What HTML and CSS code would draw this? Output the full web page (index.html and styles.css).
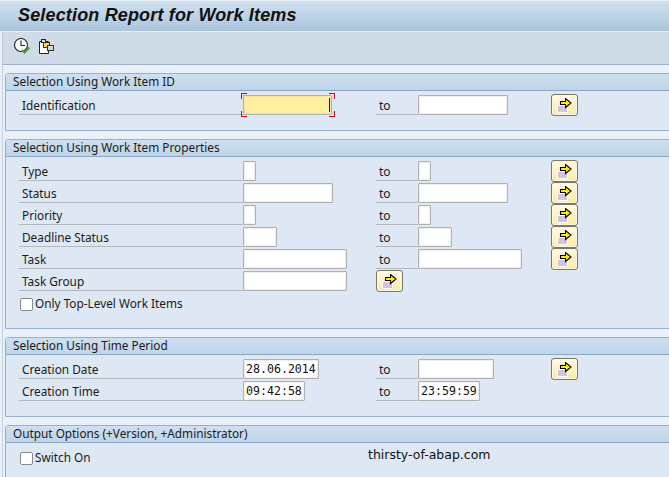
FILE: index.html
```html
<!DOCTYPE html>
<html lang="en">
<head>
<meta charset="utf-8">
<title>Selection Report for Work Items</title>
<link rel="stylesheet" href="styles.css">
</head>
<body>
<svg class="defs" width="0" height="0" aria-hidden="true">
  <symbol id="multi" viewBox="0 0 16 15">
    <rect x="0.500" y="7.500" width="10" height="7" fill="#d3c3e0" stroke="#fff"/>
    <path d="M3.500 3.500h5V.5l5.500 4.500-5.500 4.500v-3h-5z" fill="#ffee00" stroke="#000" stroke-width="1.100"/>
  </symbol>
</svg>
<div class="screen">
  <header class="titlebar"><h1 class="title">Selection Report for Work Items</h1></header>
  <nav class="toolbar">
    <svg class="tool" width="17" height="17" viewBox="0 0 17 17">
      <circle cx="7" cy="7" r="6.500" fill="#fff" stroke="#222" stroke-width="1.100"/>
      <path d="M7 2.500V7.500h4" fill="none" stroke="#222" stroke-width="1.100"/>
      <path d="M8 12l2.500 2.500 5-5" fill="none" stroke="#4fa52e" stroke-width="2"/>
    </svg>
    <svg class="tool" width="16" height="17" viewBox="0 0 16 17">
      <path d="M1.500 3.500h9v12h-9z" fill="#fff" stroke="#222"/>
      <rect x="3.500" y="1.500" width="4" height="3" fill="#ddd" stroke="#222"/>
      <rect x="5.500" y="4.500" width="6" height="5" fill="#f5d94a" stroke="#333"/>
      <rect x="9.500" y="7.500" width="6" height="5" fill="#d8d8d8" stroke="#333"/>
    </svg>
  </nav>
  <main class="content">
    <section class="group">
      <h2 class="group-title">Selection Using Work Item ID</h2>
      <div class="rows">
        <div class="row">
          <span class="label">Identification</span>
          <span class="cell"><span class="field w88 focused"><i class="corners"></i><i class="caret"></i></span></span>
          <span class="to">to</span>
          <span class="cell"><span class="field w90"></span></span>
          <button class="more" type="button" aria-label="Multiple selection"><svg width="16" height="15"><use href="#multi"/></svg></button>
        </div>
      </div>
    </section>
    <section class="group">
      <h2 class="group-title">Selection Using Work Item Properties</h2>
      <div class="rows">
        <div class="row">
          <span class="label">Type</span>
          <span class="cell"><span class="field w13"></span></span>
          <span class="to">to</span>
          <span class="cell"><span class="field w13"></span></span>
          <button class="more" type="button" aria-label="Multiple selection"><svg width="16" height="15"><use href="#multi"/></svg></button>
        </div>
        <div class="row">
          <span class="label">Status</span>
          <span class="cell"><span class="field w90"></span></span>
          <span class="to">to</span>
          <span class="cell"><span class="field w90"></span></span>
          <button class="more" type="button" aria-label="Multiple selection"><svg width="16" height="15"><use href="#multi"/></svg></button>
        </div>
        <div class="row">
          <span class="label">Priority</span>
          <span class="cell"><span class="field w13"></span></span>
          <span class="to">to</span>
          <span class="cell"><span class="field w13"></span></span>
          <button class="more" type="button" aria-label="Multiple selection"><svg width="16" height="15"><use href="#multi"/></svg></button>
        </div>
        <div class="row">
          <span class="label">Deadline Status</span>
          <span class="cell"><span class="field w34"></span></span>
          <span class="to">to</span>
          <span class="cell"><span class="field w34"></span></span>
          <button class="more" type="button" aria-label="Multiple selection"><svg width="16" height="15"><use href="#multi"/></svg></button>
        </div>
        <div class="row">
          <span class="label">Task</span>
          <span class="cell"><span class="field w104"></span></span>
          <span class="to">to</span>
          <span class="cell"><span class="field w104"></span></span>
          <button class="more" type="button" aria-label="Multiple selection"><svg width="16" height="15"><use href="#multi"/></svg></button>
        </div>
        <div class="row">
          <span class="label">Task Group</span>
          <span class="cell"><span class="field w104"></span></span>
          <button class="more" type="button" aria-label="Multiple selection"><svg width="16" height="15"><use href="#multi"/></svg></button>
        </div>
        <label class="check-row"><span class="box"></span><span class="check-text">Only Top-Level Work Items</span></label>
      </div>
    </section>
    <section class="group">
      <h2 class="group-title">Selection Using Time Period</h2>
      <div class="rows">
        <div class="row">
          <span class="label">Creation Date</span>
          <span class="cell"><span class="field w76 mono">28.06.2014</span></span>
          <span class="to">to</span>
          <span class="cell"><span class="field w76"></span></span>
          <button class="more" type="button" aria-label="Multiple selection"><svg width="16" height="15"><use href="#multi"/></svg></button>
        </div>
        <div class="row">
          <span class="label">Creation Time</span>
          <span class="cell"><span class="field w62 mono">09:42:58</span></span>
          <span class="to">to</span>
          <span class="cell"><span class="field w62 mono">23:59:59</span></span>
        </div>
      </div>
    </section>
    <section class="group last">
      <h2 class="group-title">Output Options (+Version, +Administrator)</h2>
      <div class="rows">
        <label class="check-row"><span class="box"></span><span class="check-text">Switch On</span></label>
      </div>
    </section>
  </main>
  <div class="watermark">thirsty-of-abap.com</div>
</div>
</body>
</html>
```
FILE: styles.css
```css
* { box-sizing: border-box; }
html, body { margin: 0; padding: 0; }
body {
  width: 669px;
  height: 477px;
  overflow: hidden;
  font-family: "Noto Sans", sans-serif;
  font-size: 11.8px;
  color: #1a1a1a;
  background: #e9f0f7;
}
.defs { position: absolute; }
.screen { position: relative; height: 477px; overflow: hidden; }
.titlebar {
  height: 32px;
  padding: 0 0 2px 18px;
  display: flex;
  align-items: center;
  border-top: 1px solid #e8f0f6;
  border-bottom: 1px solid #e6eef5;
  background: linear-gradient(#d0e1ef, #abc4dc);
}
.title {
  margin: 0;
  font: italic bold 18px "Liberation Sans", sans-serif;
  letter-spacing: 0.16px;
  color: #111;
}
.toolbar {
  height: 33px;
  display: flex;
  align-items: flex-start;
  gap: 7px;
  padding: 6px 0 0 11px;
  margin-left: 2px;
  background: #cfdce7;
  border-bottom: 1px solid #9db1c8;
  border-left: 1px solid #b6c6d6;
}
.tool { display: block; }
.content {
  margin-left: 2px;
  padding: 8px 0 0 2px;
  border-left: 1px solid #c4d2e0;
}
.group {
  margin: 0 -4px 8px 0;
  border: 1px solid #94b1d0;
  border-radius: 3px 0 0 0;
  background: #dde8f4;
}
.group-title {
  margin: 0;
  height: 17px;
  padding: 0 0 0 7px;
  font-size: 11.8px;
  font-weight: normal;
  line-height: 14px;
  background: linear-gradient(#cfe0f0, #bed4e8);
  border-bottom: 1px solid #8ba6c6;
}
.rows { padding: 4px 0 13px 13px; }
.row { display: flex; height: 22px; align-items: flex-start; }
.label {
  width: 224px;
  height: 20px;
  padding-left: 3px;
  line-height: 20px;
  border-bottom: 1px solid #b4b8bd;
}
.cell { width: 133px; }
.to {
  width: 42px;
  height: 20px;
  padding-left: 3px;
  line-height: 21px;
  font-size: 12px;
  border-bottom: 1px solid #b4b8bd;
}
.field {
  position: relative;
  display: block;
  height: 20px;
  background: #fff;
  border: 1px solid #b0b0b0;
  border-radius: 1px;
  box-shadow: inset 0 0 0 1px #f0f0f0;
}
.w13 { width: 13px; }
.w34 { width: 34px; }
.w62 { width: 62px; }
.w76 { width: 76px; }
.w88 { width: 89px; }
.w90 { width: 90px; }
.w104 { width: 104px; }
.mono {
  font-family: "DejaVu Sans Mono", monospace;
  font-size: 11.6px;
  line-height: 19px;
  padding-left: 2px;
  color: #111;
}
.focused { background: #ffef9f; box-shadow: inset 0 0 0 1px #f3e6a5; }
.caret {
  position: absolute;
  right: 1px;
  top: 2px;
  bottom: 2px;
  width: 1px;
  background: #15203f;
}
.corners {
  position: absolute;
  left: -3px;
  top: -3px;
  right: -4px;
  bottom: -3px;
  background:
    linear-gradient(#e8000f, #e8000f) left top / 6px 1px no-repeat,
    linear-gradient(#e8000f, #e8000f) left top / 1px 6px no-repeat,
    linear-gradient(#e8000f, #e8000f) right top / 6px 1px no-repeat,
    linear-gradient(#e8000f, #e8000f) right top / 1px 6px no-repeat,
    linear-gradient(#e8000f, #e8000f) left bottom / 6px 1px no-repeat,
    linear-gradient(#e8000f, #e8000f) left bottom / 1px 6px no-repeat,
    linear-gradient(#e8000f, #e8000f) right bottom / 6px 1px no-repeat,
    linear-gradient(#e8000f, #e8000f) right bottom / 1px 6px no-repeat;
}
.more {
  width: 27px;
  height: 22px;
  margin: -1px 0 0 0;
  padding: 0 0 0 1px;
  display: flex;
  align-items: center;
  justify-content: center;
  background: linear-gradient(#fffce6, #fde9a3);
  border: 1px solid #78786c;
  border-radius: 3px;
  box-shadow: inset 0 0 0 1px #fff8d8;
}
.check-row {
  display: flex;
  align-items: center;
  height: 22px;
  padding: 0 0 0 1px;
}
.check-text { margin-bottom: 2px; }
.box {
  width: 13px;
  height: 13px;
  margin-right: 2px;
  background: #fff;
  border: 1px solid #8a8a8a;
  border-radius: 2px;
}
.last { margin-bottom: 0; }
.watermark {
  position: absolute;
  left: 368px;
  top: 447px;
  font: 12.5px "DejaVu Sans", sans-serif;
  color: #111;
}
```
